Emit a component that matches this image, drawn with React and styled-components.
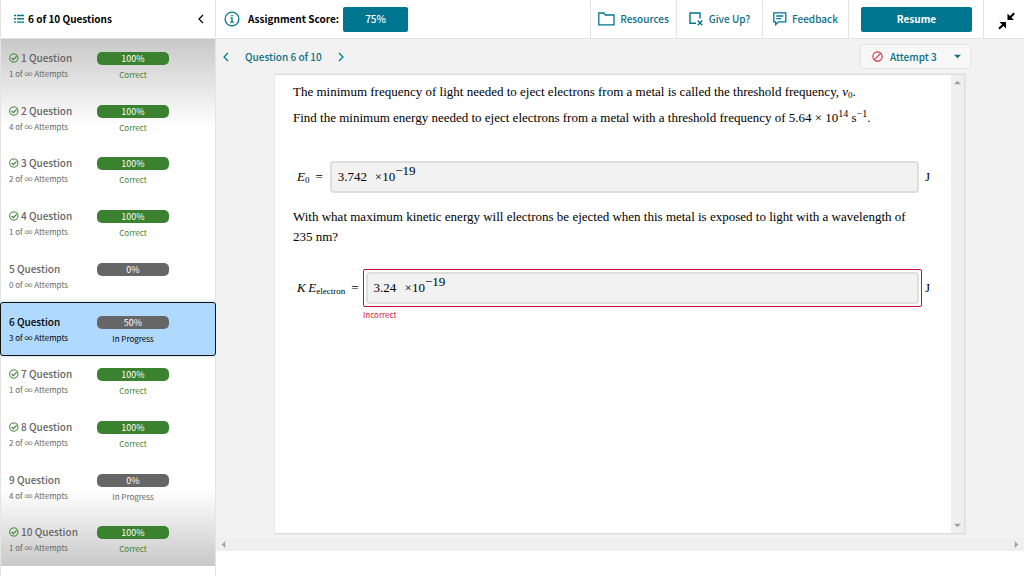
import React, { useState } from "react";
import styled, { createGlobalStyle } from "styled-components";

const GlobalStyle = createGlobalStyle`
  * {
    box-sizing: border-box;
  }
  body {
    margin: 0;
    background-color: white;
    color: #000;
    font-family: "Noto Sans CJK SC", "Open Sans", sans-serif;
    font-size: 10px;
    line-height: 16px;
  }
  button, input, select {
    font: inherit;
    color: inherit;
    border: 0;
    padding: 0;
    margin: 0;
    background: none;
  }
  button, select {
    cursor: pointer;
  }
  svg {
    display: block;
    flex: none;
  }
`;

const teal = "#00758f";
const tealText = "#0b6f85";
const green = "#3a8230";
const gray = "#666666";
const line = "#e4e4e4";

const Page = styled.div`
  display: flex;
  min-height: 100vh;
`;

const Sidebar = styled.aside`
  display: flex;
  flex-direction: column;
  flex: none;
  width: 216px;
  padding-bottom: 10px;
  border-left: 1px solid ${line};
  border-right: 1px solid ${line};
`;

const SidebarHeader = styled.header`
  display: flex;
  align-items: center;
  gap: 4px;
  height: 39px;
  padding: 0 11px 0 13px;
  border-bottom: 1px solid ${line};

  h2 {
    flex: 1;
    margin: 0;
    font-size: 10px;
    font-weight: 700;
  }
`;

const IconButton = styled.button`
  display: grid;
  place-items: center;
  color: ${(props) => props.$color || "#000"};
`;

const QuestionList = styled.ol`
  display: flex;
  flex-direction: column;
  flex: 1;
  margin: 0;
  padding: 0;
  list-style: none;
  background: linear-gradient(#c8c8c8, #fff 88px, #fff calc(100% - 76px), #c8c8c8);

  li {
    display: flex;
    flex: 1;
  }
`;

const QuestionRow = styled.button`
  display: grid;
  grid-template-columns: 88px 72px;
  flex: 1;
  align-items: start;
  padding: 11px 0 0 8px;
  text-align: left;
  color: ${(props) => (props.$active ? "#000" : gray)};
  background-color: ${(props) => (props.$active ? "#b0d9ff" : "transparent")};
  border-radius: 2px;
  outline: ${(props) => (props.$active ? "1px solid #111" : "none")};
  box-shadow: ${(props) => (props.$active ? "0 0 3px 2px #cfe6ec" : "none")};
`;

const QuestionTitle = styled.span`
  display: flex;
  align-items: center;
  gap: 2px;
  font-weight: 500;
`;

const Attempts = styled.span`
  display: block;
  font-size: 8px;
`;

const Score = styled.span`
  display: block;
  height: 13px;
  margin: 2px 0;
  border-radius: 5px;
  background-color: ${(props) => (props.$full ? green : gray)};
  color: white;
  font-size: 9px;
  line-height: 13px;
  text-align: center;
`;

const Status = styled.span`
  display: block;
  font-size: 8px;
  text-align: center;
  color: ${(props) => (props.$correct ? green : "inherit")};
`;

const Main = styled.main`
  display: flex;
  flex-direction: column;
  flex: 1;
  min-width: 0;
  padding-bottom: 25px;
`;

const TopBar = styled.header`
  display: flex;
  height: 39px;
  border-bottom: 1px solid ${line};
`;

const Assignment = styled.div`
  display: flex;
  align-items: center;
  flex: 1;
  padding-left: 8px;
  font-weight: 700;

  span {
    margin: 0 4px 0 8px;
  }
`;

const FilledButton = styled.button`
  width: ${(props) => props.$width}px;
  height: 25px;
  border-radius: 2px;
  background-color: ${teal};
  color: white;
  font-weight: ${(props) => (props.$bold ? 700 : 500)};
`;

const Tool = styled.button`
  display: flex;
  align-items: center;
  justify-content: center;
  gap: 5px;
  width: 86px;
  border-left: 1px solid ${line};
  color: ${tealText};
  font-weight: 500;
`;

const TopCell = styled.div`
  display: flex;
  align-items: center;
  padding: ${(props) => props.$padding};
  border-left: 1px solid ${line};
`;

const Workspace = styled.section`
  display: flex;
  flex-direction: column;
  flex: 1;
  background-color: #f2f2f2;
`;

const QuestionNav = styled.nav`
  display: flex;
  align-items: center;
  gap: 16px;
  height: 35px;
  padding: 0 53px 0 7px;
  color: ${tealText};
  font-weight: 500;
`;

const AttemptPicker = styled.label`
  display: flex;
  align-items: center;
  gap: 7px;
  width: 111px;
  height: 25px;
  margin-left: auto;
  padding: 0 9px 0 11px;
  border: 1px solid ${line};
  border-radius: 2px;
  background-color: #f8f8f8;

  select {
    flex: 1;
    min-width: 0;
    appearance: none;
  }
`;

const Sheet = styled.article`
  display: flex;
  flex: 1;
  margin: 0 59px 4px;
  background-color: white;
  border: 1px solid #dcdcdc;
  border-width: 1px 1px 1px 0;
  box-shadow: 0 0 1px #bbb;
`;

const Problem = styled.div`
  flex: 1;
  padding: 7px 18px 0 18px;
  font-family: "Liberation Serif", serif;
  font-size: 13px;
  line-height: 20px;

  p {
    margin: 0 0 6px;
  }
  sub, sup {
    font-size: 10px;
    line-height: 0;
  }
  sub {
    font-size: 9px;
    vertical-align: -2px;
  }
`;

const AnswerRow = styled.div`
  display: flex;
  align-items: center;
  padding-left: 4px;
  margin: ${(props) => (props.$wrong ? "22px 0 0" : "33px 0 14px")};
`;

const Formula = styled.span`
  flex: none;
  margin-right: ${(props) => (props.$tight ? 4 : 7)}px;

  sub {
    margin-right: 6px;
  }
`;

const WrongFrame = styled.div`
  display: flex;
  flex: 1;
  padding: 2px;
  border: 1px solid #c8102e;
  border-radius: 2px;
`;

const AnswerBox = styled.div`
  display: flex;
  align-items: center;
  flex: 1;
  height: 32px;
  padding: 0 6px;
  border: 2px solid #dedede;
  border-radius: 4px;
  background-color: #f2f2f2;
`;

const Mantissa = styled.input`
  width: ${(props) => props.$width}px;
`;

const Exponent = styled.input`
  align-self: flex-start;
  width: 24px;
  height: 16px;
`;

const Unit = styled.span`
  flex: none;
  width: ${(props) => (props.$tight ? 11 : 14)}px;
  padding-left: ${(props) => (props.$tight ? 3 : 6)}px;
`;

const ErrorText = styled.p`
  padding-left: 70px;
  color: #d0162f;
  font-family: "Noto Sans CJK SC", sans-serif;
  font-size: 8px;
  line-height: 16px;
`;

const ScrollTrack = styled.div`
  display: flex;
  flex-direction: ${(props) => (props.$vertical ? "column" : "row")};
  justify-content: space-between;
  align-items: center;
  flex: none;
  padding: ${(props) => (props.$vertical ? "4px 3px" : "3px 4px")};
  background-color: #efefef;
  color: #a2a2a2;
`;

const Triangle = ({ rotate = 0 }) => (
  <svg width="7" height="7" viewBox="0 0 8 8" aria-hidden="true">
    <path d="M0 6 4 2l4 4z" fill="currentColor" transform={`rotate(${rotate} 4 4)`} />
  </svg>
);

const Chevron = ({ right }) => (
  <svg width="6" height="10" viewBox="0 0 6 10" fill="none" stroke="currentColor" strokeWidth="1.2">
    <path d={right ? "M1 1l4 4-4 4" : "M5 1 1 5l4 4"} />
  </svg>
);

const ListIcon = () => (
  <svg width="10" height="10" viewBox="0 0 10 10" fill="none" stroke={teal} strokeWidth="1.4">
    <path d="M0 1.5h2M3 1.5h7M0 4.8h2M3 4.8h7M0 8.1h2M3 8.1h7" />
  </svg>
);

const CheckIcon = () => (
  <svg width="10" height="10" viewBox="0 0 10 10" fill="none" stroke={green}>
    <circle cx="4.8" cy="5" r="4.1" strokeWidth="1" />
    <path d="M2.7 5 4.3 6.6 7.6 3.3" strokeWidth="1.1" />
  </svg>
);

const InfoIcon = () => (
  <svg width="16" height="16" viewBox="0 0 16 16" fill="none" stroke={teal} strokeWidth="1.3">
    <circle cx="8" cy="8" r="6.9" />
    <path d="M6.5 6.9H8v4M6.2 11.2h3.6M7.3 4.5h1.4" />
  </svg>
);

const FolderIcon = () => (
  <svg width="17" height="14" viewBox="0 0 17 14" fill="none" stroke={teal} strokeWidth="1.3">
    <path d="M.8 12.8V1h5l1.6 2H16v9.8z" />
  </svg>
);

const GiveUpIcon = () => (
  <svg width="15" height="14" viewBox="0 0 15 14" fill="none" stroke={teal} strokeWidth="1.4">
    <path d="M7 11.3H1V1h10v5.5M8.7 8.6l4.6 4.6M13.3 8.6l-4.6 4.6" />
  </svg>
);

const FeedbackIcon = () => (
  <svg width="14" height="14" viewBox="0 0 14 14" fill="none" stroke={teal} strokeWidth="1.3">
    <path d="M.8.8h12v9H5.5L2.7 12.6V9.8H.8zM3.2 4h7M3.2 6.7h5" />
  </svg>
);

const CollapseIcon = () => (
  <svg width="18" height="18" viewBox="0 0 18 18" fill="currentColor" stroke="currentColor">
    <path d="M9.5 1.5V8H16zM1.5 10H8v6.5z" stroke="none" />
    <path d="M16.2 1.2 11.5 6M1 16.8 6 12" strokeWidth="2" />
  </svg>
);

const BlockedIcon = () => (
  <svg width="11" height="11" viewBox="0 0 11 11" fill="none" stroke="#d9263f" strokeWidth="1.1">
    <circle cx="5.5" cy="5.5" r="4.6" />
    <path d="M2.4 8.6 8.6 2.4" />
  </svg>
);

const questions = [
  { attempts: 1, score: 100, status: "Correct" },
  { attempts: 4, score: 100, status: "Correct" },
  { attempts: 2, score: 100, status: "Correct" },
  { attempts: 1, score: 100, status: "Correct" },
  { attempts: 0, score: 0, status: "" },
  { attempts: 3, score: 50, status: "In Progress" },
  { attempts: 1, score: 100, status: "Correct" },
  { attempts: 2, score: 100, status: "Correct" },
  { attempts: 4, score: 0, status: "In Progress" },
  { attempts: 1, score: 100, status: "Correct" },
];

const Answer = ({ label, mantissa, mantissaWidth }) => (
  <AnswerBox>
    <Mantissa $width={mantissaWidth} aria-label={label} defaultValue={mantissa} />
    <span>×10</span>
    <Exponent aria-label={`${label} exponent`} defaultValue="−19" />
  </AnswerBox>
);

const App = () => {
  const [current, setCurrent] = useState(6);

  const goTo = (number) => {
    setCurrent(Math.min(Math.max(number, 1), questions.length));
  };

  return (
    <>
      <GlobalStyle />
      <Page>
        <Sidebar>
          <SidebarHeader>
            <ListIcon />
            <h2>{current} of 10 Questions</h2>
            <IconButton aria-label="Hide questions">
              <Chevron />
            </IconButton>
          </SidebarHeader>
          <QuestionList>
            {questions.map((question, i) => {
              const correct = question.status === "Correct";
              return (
                <li key={i}>
                  <QuestionRow $active={current === i + 1} onClick={() => goTo(i + 1)}>
                    <span>
                      <QuestionTitle>
                        {correct && <CheckIcon />}
                        {i + 1} Question
                      </QuestionTitle>
                      <Attempts>{question.attempts} of ∞ Attempts</Attempts>
                    </span>
                    <span>
                      <Score $full={question.score === 100}>{question.score}%</Score>
                      <Status $correct={correct}>{question.status}</Status>
                    </span>
                  </QuestionRow>
                </li>
              );
            })}
          </QuestionList>
        </Sidebar>

        <Main>
          <TopBar>
            <Assignment>
              <InfoIcon />
              <span>Assignment Score:</span>
              <FilledButton $width={65}>75%</FilledButton>
            </Assignment>
            <Tool>
              <FolderIcon />
              Resources
            </Tool>
            <Tool>
              <GiveUpIcon />
              Give Up?
            </Tool>
            <Tool>
              <FeedbackIcon />
              Feedback
            </Tool>
            <TopCell $padding="0 11px 0 12px">
              <FilledButton $width={111} $bold>
                Resume
              </FilledButton>
            </TopCell>
            <TopCell $padding="3px 8px 0 14px">
              <IconButton aria-label="Exit full screen">
                <CollapseIcon />
              </IconButton>
            </TopCell>
          </TopBar>

          <Workspace>
            <QuestionNav>
              <IconButton $color={teal} aria-label="Previous question" onClick={() => goTo(current - 1)}>
                <Chevron />
              </IconButton>
              <span>Question {current} of 10</span>
              <IconButton $color={teal} aria-label="Next question" onClick={() => goTo(current + 1)}>
                <Chevron right />
              </IconButton>
              <AttemptPicker>
                <BlockedIcon />
                <select aria-label="Attempt" defaultValue="3">
                  <option value="1">Attempt 1</option>
                  <option value="2">Attempt 2</option>
                  <option value="3">Attempt 3</option>
                </select>
                <Triangle rotate={180} />
              </AttemptPicker>
            </QuestionNav>

            <Sheet>
              <Problem>
                <p>
                  The minimum frequency of light needed to eject electrons from a metal is called the
                  threshold frequency, <i>ν</i><sub>0</sub>.
                </p>
                <p>
                  Find the minimum energy needed to eject electrons from a metal with a threshold
                  frequency of 5.64 × 10<sup>14</sup> s<sup>−1</sup>.
                </p>
                <AnswerRow>
                  <Formula>
                    <i>E</i><sub>0</sub>=
                  </Formula>
                  <Answer label="Minimum energy" mantissa="3.742" mantissaWidth={37} />
                  <Unit>J</Unit>
                </AnswerRow>
                <p>
                  With what maximum kinetic energy will electrons be ejected when this metal is exposed
                  to light with a wavelength of 235&nbsp;nm?
                </p>
                <AnswerRow $wrong>
                  <Formula $tight>
                    <i>K&thinsp;E</i><sub>electron</sub>=
                  </Formula>
                  <WrongFrame>
                    <Answer label="Kinetic energy" mantissa="3.24" mantissaWidth={31} />
                  </WrongFrame>
                  <Unit $tight>J</Unit>
                </AnswerRow>
                <ErrorText>Incorrect</ErrorText>
              </Problem>
              <ScrollTrack $vertical>
                <Triangle />
                <Triangle rotate={180} />
              </ScrollTrack>
            </Sheet>
            <ScrollTrack>
              <Triangle rotate={-90} />
              <Triangle rotate={90} />
            </ScrollTrack>
          </Workspace>
        </Main>
      </Page>
    </>
  );
};

export default App;
